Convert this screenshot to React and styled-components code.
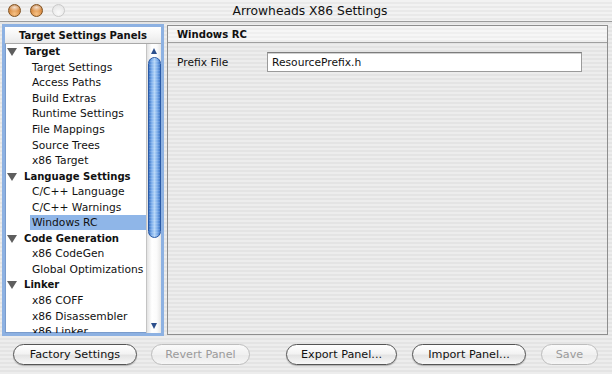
import React from 'react';
import styled, { createGlobalStyle, css } from 'styled-components';

const Global = createGlobalStyle`
  html, body { margin: 0; padding: 0; }
  body {
    width: 612px; height: 374px; overflow: hidden;
    font-family: "DejaVu Sans", "Liberation Sans", sans-serif;
    -webkit-font-smoothing: antialiased;
  }
`;

const stripes = css`
  background: repeating-linear-gradient(to bottom, #ededed 0px, #ededed 2px, #e4e4e4 2px, #e4e4e4 4px);
`;

const Window = styled.div`
  width: 612px;
  height: 374px;
  display: flex;
  flex-direction: column;
  ${stripes}
`;

const TitleBar = styled.div`
  height: 22px;
  box-sizing: border-box;
  border-bottom: 1px solid #9c9c9c;
  display: grid;
  grid-template-columns: 1fr auto 1fr;
  align-items: center;
  padding-left: 8px;
  background: repeating-linear-gradient(to bottom, #f2f2f2 0px, #f2f2f2 2px, #e9e9e9 2px, #e9e9e9 4px);
`;

const Lights = styled.div`
  display: flex;
  gap: 9px;
  align-items: center;
`;

const Light = styled.span`
  width: 13px;
  height: 13px;
  border-radius: 50%;
  box-sizing: border-box;
  ${p => p.$off ? css`
    border: 1px solid #c9c9c9;
    background: radial-gradient(circle at 50% 70%, #fafafa 0%, #e8e8e8 70%, #dcdcdc 100%);
  ` : css`
    border: 1px solid #80511f;
    background:
      radial-gradient(ellipse 60% 35% at 50% 22%, rgba(255,255,255,0.75) 0%, rgba(255,255,255,0) 100%),
      radial-gradient(circle at 50% 80%, #f7c285 0%, #d98d45 55%, #a8642a 100%);
  `}
`;

const Title = styled.div`
  font-size: 12.3px;
  color: #111;
  letter-spacing: 0;
  padding-top: 1px;
`;

const Body = styled.div`
  flex: 1;
  display: flex;
  gap: 3px;
  padding: 2px 4px 0 2px;
  min-height: 0;
`;

const LeftPanel = styled.div`
  width: 162px;
  height: 312px;
  box-sizing: border-box;
  border: 3px solid #8db1e2;
  box-shadow: inset 0 0 0 1px #7a9ccc;
  display: flex;
  flex-direction: column;
  background: #fff;
`;

const PanelHead = styled.div`
  height: 17px;
  flex: none;
  box-sizing: border-box;
  border-bottom: 1px solid #a9a9a9;
  background: linear-gradient(to bottom, #ffffff, #f3f3f3 60%, #e9e9e9);
  display: flex;
  align-items: center;
  justify-content: ${p => p.$center ? 'center' : 'flex-start'};
  padding-left: ${p => p.$center ? '0' : '9px'};
  font-family: "DejaVu Sans Condensed", "DejaVu Sans", sans-serif;
  font-weight: bold;
  font-size: 11.2px;
  color: #111;
`;

const ListArea = styled.div`
  flex: 1;
  display: flex;
  min-height: 0;
`;

const List = styled.div`
  flex: 1;
  overflow: hidden;
  padding-top: 0px;
`;

const Row = styled.div`
  height: 15.55px;
  display: flex;
  align-items: center;
  white-space: nowrap;
  font-size: ${p => p.$group ? '11.2px' : '10.7px'};
  font-weight: ${p => p.$group ? 'bold' : 'normal'};
  font-family: ${p => p.$group ? '"DejaVu Sans Condensed", "DejaVu Sans", sans-serif' : '"DejaVu Sans", sans-serif'};
  color: #111;
  padding-left: ${p => p.$group ? '2px' : '25px'};
`;

const Label = styled.span`
  padding: 0 2px 0 2px;
  line-height: 15px;
  ${p => p.$sel && css`
    background: #8fb6e8;
    flex: 1;
  `}
`;

const Triangle = styled.span`
  width: 0;
  height: 0;
  border-left: 5px solid transparent;
  border-right: 5px solid transparent;
  border-top: 8px solid #5e5e5e;
  margin-right: 5px;
  margin-top: 1px;
`;

const Scroll = styled.div`
  width: 15px;
  flex: none;
  box-sizing: border-box;
  border-left: 1px solid #c4c4c4;
  background: linear-gradient(to right, #e2e2e2, #ffffff 35%, #fbfbfb 70%, #e6e6e6);
  display: flex;
  flex-direction: column;
  align-items: center;
`;

const Arrow = styled.span`
  flex: none;
  width: 0;
  height: 0;
  border-left: 3.5px solid transparent;
  border-right: 3.5px solid transparent;
  ${p => p.$up ? css`
    border-bottom: 6px solid #2c4f8c;
    margin: 4px 0 3px;
  ` : css`
    border-top: 6px solid #2c4f8c;
    margin: 3px 0 4px;
  `}
`;

const Track = styled.div`
  flex: 1;
  width: 100%;
  display: flex;
  flex-direction: column;
  align-items: center;
`;

const Thumb = styled.div`
  width: 13px;
  box-sizing: border-box;
  border-radius: 7px;
  border: 1px solid #2a5aa6;
  background:
    repeating-linear-gradient(to bottom, rgba(255,255,255,0.12) 0 1px, rgba(255,255,255,0) 1px 3px),
    linear-gradient(to right, #3b73c4 0%, #7fb0ec 25%, #b3d4f7 50%, #7eaeea 75%, #3f78c8 100%);
`;

const RightPanel = styled.div`
  flex: 1;
  height: 310px;
  margin-top: 1px;
  box-sizing: border-box;
  border: 1px solid #8e8e8e;
  display: flex;
  flex-direction: column;
`;

const RightHead = styled(PanelHead)`
  height: 17px;
  border-bottom: 1px solid #a0a0a0;
  background: repeating-linear-gradient(to bottom, #f6f6f6 0px, #f6f6f6 2px, #efefef 2px, #efefef 4px);
`;

const Content = styled.div`
  padding: 9px 0 0 9px;
`;

const Field = styled.div`
  display: flex;
  align-items: center;
  gap: 0;
`;

const FieldLabel = styled.label`
  width: 90px;
  font-size: 10.7px;
  color: #111;
`;

const Input = styled.div`
  width: 315px;
  height: 20px;
  box-sizing: border-box;
  background: #fff;
  border: 1px solid #9a9a9a;
  border-top-color: #7c7c7c;
  box-shadow: inset 0 1px 0 #d0d0d0;
  display: flex;
  align-items: center;
  padding-left: 4px;
  font-size: 10.7px;
  color: #111;
`;

const ButtonBar = styled.div`
  height: 38px;
  box-sizing: border-box;
  padding: 8px 14px 0 13px;
  display: flex;
  justify-content: space-between;
`;

const Group = styled.div`
  display: flex;
  gap: ${p => p.$gap}px;
`;

const Button = styled.div`
  width: ${p => p.$w}px;
  height: 21px;
  box-sizing: border-box;
  border-radius: 11px;
  display: flex;
  align-items: center;
  justify-content: center;
  font-size: 11.2px;
  ${p => p.$disabled ? css`
    border: 1px solid #bdbdbd;
    color: #9b9b9b;
    background: linear-gradient(to bottom, #fafafa, #f0f0f0 50%, #e9e9e9 51%, #f6f6f6);
  ` : css`
    border: 1px solid #555;
    color: #111;
    background: linear-gradient(to bottom, #ffffff, #f3f3f3 45%, #e4e4e4 55%, #f7f7f7);
    box-shadow: 0 1px 1px rgba(0,0,0,0.25);
  `}
`;

const items = [
  { t: 'Target', g: true },
  { t: 'Target Settings' },
  { t: 'Access Paths' },
  { t: 'Build Extras' },
  { t: 'Runtime Settings' },
  { t: 'File Mappings' },
  { t: 'Source Trees' },
  { t: 'x86 Target' },
  { t: 'Language Settings', g: true },
  { t: 'C/C++ Language' },
  { t: 'C/C++ Warnings' },
  { t: 'Windows RC', sel: true },
  { t: 'Code Generation', g: true },
  { t: 'x86 CodeGen' },
  { t: 'Global Optimizations' },
  { t: 'Linker', g: true },
  { t: 'x86 COFF' },
  { t: 'x86 Disassembler' },
  { t: 'x86 Linker' },
];

export default function App() {
  return (
    <>
      <Global />
      <Window>
        <TitleBar>
          <Lights>
            <Light />
            <Light />
            <Light $off />
          </Lights>
          <Title>Arrowheads X86 Settings</Title>
          <div />
        </TitleBar>
        <Body>
          <LeftPanel>
            <PanelHead $center>Target Settings Panels</PanelHead>
            <ListArea>
              <List>
                {items.map(it => (
                  <Row key={it.t} $group={it.g}>
                    {it.g && <Triangle />}
                    <Label $sel={it.sel}>{it.t}</Label>
                  </Row>
                ))}
              </List>
              <Scroll>
                <Arrow $up />
                <Track>
                  <Thumb style={{ height: '181px' }} />
                </Track>
                <Arrow />
              </Scroll>
            </ListArea>
          </LeftPanel>
          <RightPanel>
            <RightHead>Windows RC</RightHead>
            <Content>
              <Field>
                <FieldLabel>Prefix File</FieldLabel>
                <Input>ResourcePrefix.h</Input>
              </Field>
            </Content>
          </RightPanel>
        </Body>
        <ButtonBar>
          <Group $gap={14}>
            <Button $w={124}>Factory Settings</Button>
            <Button $w={99} $disabled>Revert Panel</Button>
          </Group>
          <Group $gap={15}>
            <Button $w={111}>Export Panel...</Button>
            <Button $w={114}>Import Panel...</Button>
            <Button $w={57} $disabled>Save</Button>
          </Group>
        </ButtonBar>
      </Window>
    </>
  );
}
